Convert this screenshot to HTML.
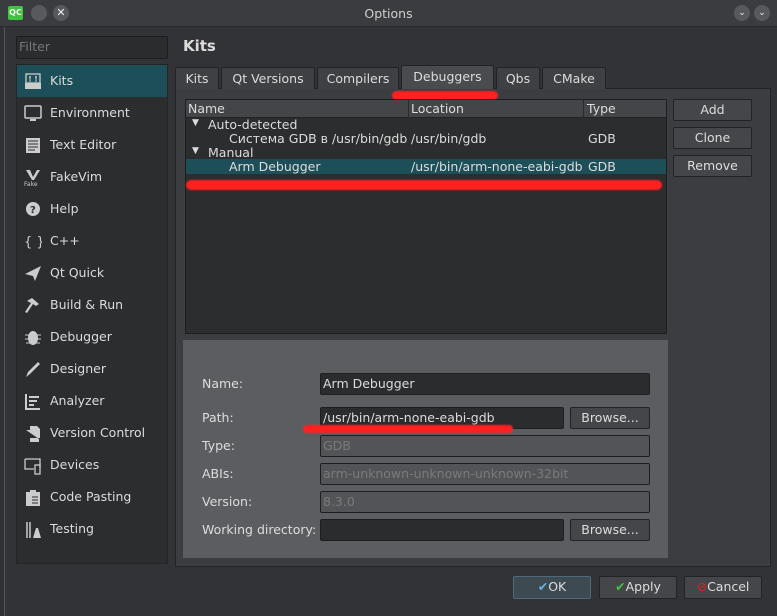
<!DOCTYPE html>
<html><head><style>
*{box-sizing:border-box;margin:0;padding:0}
body{width:777px;height:616px;background:#2f3033;font-family:"DejaVu Sans",sans-serif;font-size:12.5px;color:#dcdcdc;position:relative;overflow:hidden}
.a{position:absolute}
.title{left:0;top:0;width:777px;height:27px;background:#3b3c3f;border-bottom:1px solid #2a2a2c}
.win{left:4px;top:27px;width:773px;height:589px;background:#323336;border-left:1px solid #555}
.inp{background:#2b2c2e;border:1px solid #1e1e20;border-radius:2px;padding-left:2px;line-height:20px}
.btn{background:#45464a;border:1px solid #232325;border-radius:2px;text-align:center;line-height:19px;color:#ddd}
.tab{top:67px;height:22px;background:#3f4043;border:1px solid #232325;border-bottom:none;text-align:center;line-height:21px;border-radius:2px 2px 0 0}
.side div{height:32px;line-height:32px;padding-left:33px;position:relative}
.side svg{position:absolute;left:7px;top:8px}
.red{background:#ff2020;border-radius:5px;filter:blur(0.8px)}
.lbl{left:202px;color:#ddd}
.dis{color:#7a7a7a}
</style></head><body>
<div class="a title"></div>
<div class="a" style="left:8px;top:6px;width:15px;height:14px;background:#3ec43e;border-radius:2px;color:#fff;font-size:8px;font-weight:bold;line-height:14px;text-align:center">QC</div>
<div class="a" style="left:31px;top:5px;width:16px;height:16px;border-radius:8px;background:#58595d"></div>
<div class="a" style="left:53px;top:5px;width:16px;height:16px;border-radius:8px;background:#58595d;color:#eee;font-size:11px;line-height:16px;text-align:center">✕</div>
<div class="a" style="left:0;top:6px;width:777px;text-align:center;color:#cfcfcf">Options</div>
<div class="a" style="left:734px;top:5px;width:16px;height:16px;border-radius:8px;background:#58595d;color:#eee;font-size:9px;line-height:16px;text-align:center">⌄</div>
<div class="a" style="left:754px;top:5px;width:16px;height:16px;border-radius:8px;background:#58595d;color:#eee;font-size:9px;line-height:16px;text-align:center">⌄</div>
<div class="a win"></div>
<div class="a inp" style="left:16px;top:36px;width:152px;height:23px;color:#777">Filter</div>
<div class="a side" style="left:16px;top:64px;width:152px;height:500px;background:#2c2d2f;border:1px solid #252527">
<div style="background:#1d4f58">
<svg width="18" height="16"><rect x="1" y="10" width="16" height="6" fill="#ccc"/><rect x="2" y="1" width="14" height="9" fill="none" stroke="#ccc" stroke-width="1.3"/><path d="M6 3v6M12 3v6M5 4h2M11 4h2" stroke="#ccc"/></svg>Kits</div>
<div><svg width="18" height="18"><rect x="1" y="1" width="16" height="12" rx="1" fill="none" stroke="#ccc" stroke-width="1.5"/><rect x="6" y="14" width="6" height="2" fill="#ccc"/></svg>Environment</div>
<div><svg width="18" height="18"><rect x="2" y="1" width="14" height="15" fill="#ccc"/><path d="M4 4h10M4 7h10M4 10h10M4 13h7" stroke="#2c2d2f"/></svg>Text Editor</div>
<div><svg width="18" height="18"><path d="M2 1h4l3 7 4-7h3l-6 10h-2z" fill="#ccc"/><text x="0" y="17" font-size="6" fill="#ccc" font-family="DejaVu Sans">Fake</text></svg>FakeVim</div>
<div><svg width="18" height="18"><circle cx="9" cy="8" r="7" fill="#ccc"/><text x="6" y="12" font-size="10" font-weight="bold" fill="#2c2d2f">?</text></svg>Help</div>
<div><svg width="18" height="18"><text x="0" y="13" font-size="13" fill="#ccc">{ }</text></svg>C++</div>
<div><svg width="18" height="18"><path d="M1 9l16-8-6 15-2-5z" fill="#ccc"/></svg>Qt Quick</div>
<div><svg width="18" height="18"><path d="M3 4l5-3 7 6-3 2-3-2-6 9-2-1 6-9z" fill="#ccc"/></svg>Build &amp; Run</div>
<div><svg width="18" height="18"><ellipse cx="9" cy="9" rx="5" ry="7" fill="#ccc"/><path d="M1 6h16M1 10h16M2 14h14" stroke="#ccc"/></svg>Debugger</div>
<div><svg width="18" height="18"><path d="M2 16l2-5 10-10 2 2-10 10z" fill="#ccc"/></svg>Designer</div>
<div><svg width="18" height="18"><path d="M2 1v15h14M5 4h10M5 8h8M5 12h5" stroke="#ccc" stroke-width="2" fill="none"/></svg>Analyzer</div>
<div><svg width="18" height="18"><path d="M6 1h7l3 3v9h-10z M2 5h4v12h9v-3" fill="#ccc"/></svg>Version Control</div>
<div><svg width="18" height="18"><path d="M1 2h15v9M1 2v10h9" stroke="#ccc" fill="none" stroke-width="1.3"/><rect x="11" y="8" width="5" height="9" fill="none" stroke="#ccc" stroke-width="1.3"/></svg>Devices</div>
<div><svg width="18" height="18"><rect x="2" y="3" width="14" height="14" fill="#ccc"/><rect x="6" y="1" width="6" height="4" fill="#ccc"/><path d="M8 8h6M8 11h6M8 14h6" stroke="#2c2d2f"/></svg>Code Pasting</div>
<div><svg width="18" height="18"><path d="M3 1v16M6 1v16" stroke="#ccc" stroke-width="1.5"/><path d="M9 17l3-10h2l3 10z" fill="#ccc"/></svg>Testing</div>
</div>
<div class="a" style="left:183px;top:37px;font-size:15px;font-weight:bold;color:#ddd">Kits</div>
<div class="a" style="left:175px;top:88px;width:596px;height:479px;background:#3c3d40;border:1px solid #232325"></div>
<div class="a tab" style="left:175px;width:44px">Kits</div>
<div class="a tab" style="left:221px;width:94px">Qt Versions</div>
<div class="a tab" style="left:317px;width:82px">Compilers</div>
<div class="a tab" style="left:401px;top:65px;height:24px;width:93px;background:#4a4b4e">Debuggers</div>
<div class="a tab" style="left:496px;width:44px">Qbs</div>
<div class="a tab" style="left:542px;width:64px">CMake</div>
<div class="a red" style="left:392px;top:91px;width:106px;height:9px"></div>
<div class="a" style="left:185px;top:99px;width:482px;height:235px;background:#2c2d2f;border:1px solid #1e1e20"></div>
<div class="a" style="left:186px;top:100px;width:480px;height:18px;background:#444548;border-bottom:1px solid #232325"></div>
<div class="a" style="left:408px;top:100px;width:1px;height:18px;background:#2a2a2c"></div>
<div class="a" style="left:583px;top:100px;width:1px;height:18px;background:#2a2a2c"></div>
<div class="a" style="left:188px;top:101px">Name</div>
<div class="a" style="left:411px;top:101px">Location</div>
<div class="a" style="left:587px;top:101px">Type</div>
<div class="a" style="left:192px;top:118px;font-size:9px">▼</div>
<div class="a" style="left:208px;top:117px">Auto-detected</div>
<div class="a" style="left:229px;top:131px">Система GDB в /usr/bin/gdb</div>
<div class="a" style="left:411px;top:131px">/usr/bin/gdb</div>
<div class="a" style="left:588px;top:131px">GDB</div>
<div class="a" style="left:192px;top:146px;font-size:9px">▼</div>
<div class="a" style="left:208px;top:145px">Manual</div>
<div class="a" style="left:186px;top:159px;width:480px;height:15px;background:#1d4f58"></div>
<div class="a" style="left:229px;top:159px">Arm Debugger</div>
<div class="a" style="left:411px;top:159px">/usr/bin/arm-none-eabi-gdb</div>
<div class="a" style="left:588px;top:159px">GDB</div>
<div class="a red" style="left:186px;top:180px;width:476px;height:10px"></div>
<div class="a btn" style="left:673px;top:99px;width:79px;height:22px">Add</div>
<div class="a btn" style="left:673px;top:127px;width:79px;height:22px">Clone</div>
<div class="a btn" style="left:673px;top:155px;width:79px;height:22px">Remove</div>
<div class="a" style="left:183px;top:340px;width:485px;height:218px;background:#5c5d60"></div>
<div class="a lbl" style="top:376px">Name:</div>
<div class="a inp" style="left:320px;top:373px;width:330px;height:22px">Arm Debugger</div>
<div class="a lbl" style="top:410px">Path:</div>
<div class="a inp" style="left:320px;top:407px;width:244px;height:22px">/usr/bin/arm-none-eabi-gdb</div>
<div class="a btn" style="left:570px;top:407px;width:80px;height:22px">Browse...</div>
<div class="a red" style="left:303px;top:425px;width:210px;height:8px"></div>
<div class="a lbl" style="top:438px">Type:</div>
<div class="a inp dis" style="left:320px;top:435px;width:330px;height:22px;background:#535457">GDB</div>
<div class="a lbl" style="top:466px">ABIs:</div>
<div class="a inp dis" style="left:320px;top:463px;width:330px;height:22px;background:#535457">arm-unknown-unknown-unknown-32bit</div>
<div class="a lbl" style="top:494px">Version:</div>
<div class="a inp dis" style="left:320px;top:491px;width:330px;height:22px;background:#535457">8.3.0</div>
<div class="a lbl" style="top:522px">Working directory:</div>
<div class="a inp" style="left:320px;top:519px;width:244px;height:22px"></div>
<div class="a btn" style="left:570px;top:519px;width:80px;height:22px">Browse...</div>
<div class="a btn" style="left:513px;top:576px;width:78px;height:23px;background:#3d4a52;border-color:#4d6a78"><span style="color:#6ab0e0">✔</span>OK</div>
<div class="a btn" style="left:599px;top:576px;width:78px;height:23px"><span style="color:#3ec43e">✔</span>Apply</div>
<div class="a btn" style="left:684px;top:576px;width:78px;height:23px"><span style="color:#e02020">⊘</span>Cancel</div>
</body></html>
